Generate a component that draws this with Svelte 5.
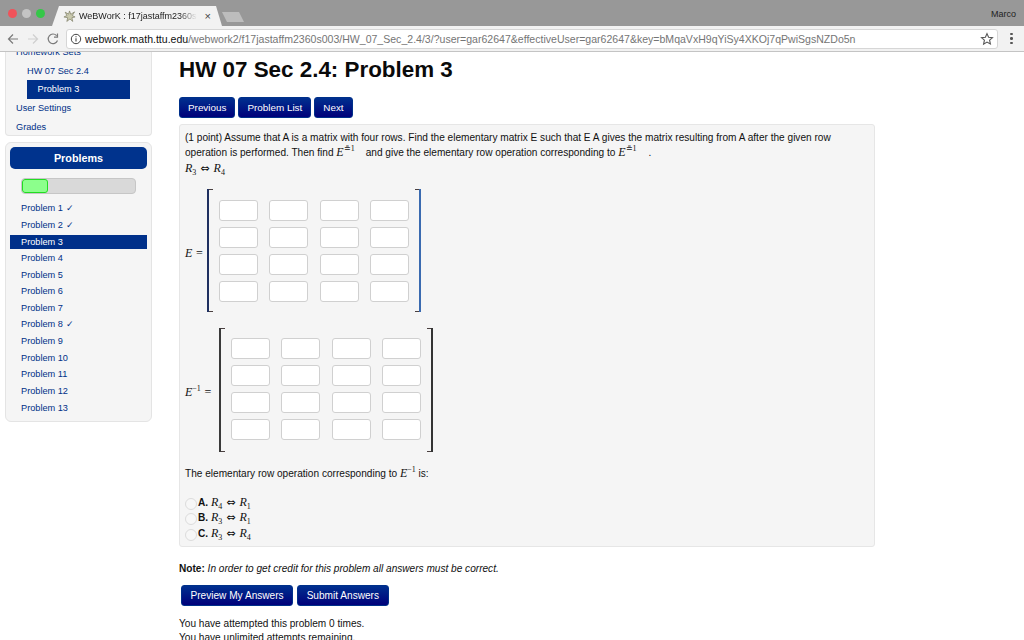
<script>
  const problems = [
    { n: 1, ok: true }, { n: 2, ok: true }, { n: 3, active: true }, { n: 4 }, { n: 5 }, { n: 6 },
    { n: 7 }, { n: 8, ok: true }, { n: 9 }, { n: 10 }, { n: 11 }, { n: 12 }, { n: 13 }
  ];
  const cells = Array.from({ length: 16 }, (_, i) => i);
</script>

<div class="window">
  <header class="titlebar">
    <div class="lights"><i class="red"></i><i class="grey"></i><i class="green"></i></div>
    <div class="tab">
      <svg class="fav" viewBox="0 0 14 14" width="13" height="13"><path d="M7 1l1.400 3.600L12.500 2 10 6l3 1.500-3.400.8.900 4-3-2.600-3.400 2.600 1-4L1 7.500 4.200 6 2.400 2.400l3.600 2z" fill="#c9c9ae" stroke="#77775f" stroke-width=".7"/></svg>
      <span class="tabtext">WeBWorK : f17jastaffm2360s003</span>
      <span class="close">×</span>
    </div>
    <div class="newtab"></div>
    <span class="user">Marco</span>
  </header>

  <div class="toolbar">
    <svg class="nav" viewBox="0 0 14 14" width="14" height="14"><path d="M12 7H3M7 2.500L2.500 7 7 11.500" fill="none" stroke="#7a7a7a" stroke-width="1.200"/></svg>
    <svg class="nav" viewBox="0 0 14 14" width="14" height="14"><path d="M2 7h9M7 2.500L11.500 7 7 11.500" fill="none" stroke="#cfcfcf" stroke-width="1.200"/></svg>
    <svg class="nav" viewBox="0 0 14 14" width="14" height="14"><path d="M11.500 8.500A4.800 4.800 0 1 1 10.600 3.600M11.500 1.500v3.600H8" fill="none" stroke="#7a7a7a" stroke-width="1.200"/></svg>
    <div class="omnibox">
      <svg viewBox="0 0 12 12" width="12" height="12"><circle cx="6" cy="6" r="4.700" fill="none" stroke="#444" stroke-width="1"/><path d="M6 5.200v3.200M6 3.300v1" stroke="#444" stroke-width="1.100"/></svg>
      <span class="url"><b>webwork.math.ttu.edu</b>/webwork2/f17jastaffm2360s003/HW_07_Sec_2.4/3/?user=gar62647&amp;effectiveUser=gar62647&amp;key=bMqaVxH9qYiSy4XKOj7qPwiSgsNZDo5n</span>
      <svg class="star" viewBox="0 0 14 14" width="14" height="14"><path d="M7 1.600l1.600 3.600 3.900.4-2.900 2.600.8 3.800L7 10.100l-3.400 2 .8-3.900L1.500 5.600l3.900-.4z" fill="none" stroke="#555" stroke-width="1.100"/></svg>
    </div>
    <div class="kebab"><i></i><i></i><i></i></div>
  </div>

  <div class="page">
    <aside class="sidebar">
      <nav class="panel links">
        <a class="top">Homework Sets</a>
        <a class="sub">HW 07 Sec 2.4</a>
        <a class="current">Problem 3</a>
        <a class="top">User Settings</a>
        <a class="top">Grades</a>
      </nav>
      <div class="panel probs">
        <div class="probhead">Problems</div>
        <div class="progress"><div class="bar"></div></div>
        <ul>
          {#each problems as p}
            <li class:active={p.active}>Problem {p.n}{#if p.ok}<span class="tick">✓</span>{/if}</li>
          {/each}
        </ul>
      </div>
    </aside>

    <main class="content">
      <h1>HW 07 Sec 2.4: Problem 3</h1>
      <div class="btns top-btns">
        <button>Previous</button><button>Problem List</button><button>Next</button>
      </div>
      <section class="problem">
        <p class="intro">(1 point) Assume that A is a matrix with four rows. Find the elementary matrix E such that E A gives the matrix resulting from A after the given row<br>
          operation is performed. Then find <span class="m">E<sup>≗1</sup></span><span class="gap1"></span>and give the elementary row operation corresponding to <span class="m">E<sup>≗1</sup></span><span class="gap2"></span>.<br>
          <span class="m">R<sub>3</sub> <span class="arr">⇔</span> R<sub>4</sub></span></p>

        <div class="eq first">
          <span class="m lhs">E =</span>
          <div class="matrix m1">
            {#each cells as c}<span class="cell"></span>{/each}
          </div>
        </div>

        <div class="eq second">
          <span class="m lhs">E<sup>−1</sup> =</span>
          <div class="matrix m2">
            {#each cells as c}<span class="cell"></span>{/each}
          </div>
        </div>

        <p class="ask">The elementary row operation corresponding to <span class="m">E<sup>−1</sup></span> is:</p>

        <div class="options">
          <label><span class="radio"></span><span><b>A.</b> <span class="m">R<sub>4</sub> <span class="arr">⇔</span> R<sub>1</sub></span></span></label>
          <label><span class="radio"></span><span><b>B.</b> <span class="m">R<sub>3</sub> <span class="arr">⇔</span> R<sub>1</sub></span></span></label>
          <label><span class="radio"></span><span><b>C.</b> <span class="m">R<sub>3</sub> <span class="arr">⇔</span> R<sub>4</sub></span></span></label>
        </div>
      </section>

      <p class="note"><b>Note:</b> <em>In order to get credit for this problem all answers must be correct.</em></p>
      <div class="btns submit-btns">
        <button>Preview My Answers</button><button>Submit Answers</button>
      </div>
      <p class="status">You have attempted this problem 0 times.<br>You have unlimited attempts remaining.</p>
    </main>
  </div>
</div>

<style>
  :global(body) { margin: 0; background: #fff; }
  .window { width: 1024px; height: 640px; overflow: hidden; display: flex; flex-direction: column; font-family: "Liberation Sans", Arial, sans-serif; color: #111; }

  .titlebar { height: 26px; flex: none; background: #989898; display: flex; align-items: flex-end; position: relative; }
  .lights { display: flex; gap: 5px; padding: 0 0 8px 8px; margin-right: 7px; }
  .lights i { width: 9px; height: 9px; border-radius: 50%; display: block; }
  .red { background: #f0525a; } .grey { background: #c4c4c4; } .green { background: #35c748; }
  .tab { width: 170px; height: 20px; background: #f2f2f2; display: flex; align-items: center; box-sizing: border-box; padding: 0 11px 0 11px; clip-path: polygon(0 100%, 7px 0, calc(100% - 6px) 0, 100% 100%); gap: 3px; }
  .fav { flex: none; }
  .tabtext { font-size: 9px; white-space: nowrap; overflow: hidden; flex: 1; color: #222; -webkit-mask-image: linear-gradient(90deg, #000 85%, transparent); mask-image: linear-gradient(90deg, #000 85%, transparent); }
  .close { font-size: 11px; color: #444; margin-left: 5px; }
  .newtab { width: 22px; height: 10px; margin: 0 0 4px 0; background: #bdbdbd; clip-path: polygon(5px 100%, 0 0, 17px 0, 100% 100%); }
  .user { position: absolute; right: 8px; top: 9px; font-size: 9px; color: #222; }

  .toolbar { height: 26px; flex: none; box-sizing: border-box; background: #f2f2f2; border-bottom: 1px solid #c4c4c4; display: flex; align-items: center; padding: 0 0 0 6px; gap: 6px; }
  .nav { flex: none; }
  .omnibox { flex: none; width: 932px; height: 20px; box-sizing: border-box; background: #fff; border: 1px solid #d6d6d6; border-radius: 3px; display: flex; align-items: center; padding: 0 3px 0 3px; gap: 3px; }
  .omnibox > svg:first-child { flex: none; }
  .url { font-size: 10.55px; color: #757575; white-space: nowrap; flex: 1; }
  .url b { font-weight: normal; color: #111; }
  .star { flex: none; }
  .kebab { display: flex; flex-direction: column; gap: 2px; margin-left: 6px; }
  .kebab i { width: 2.5px; height: 2.5px; background: #555; border-radius: 50%; display: block; }

  .page { flex: 1; min-height: 0; overflow: hidden; display: flex; align-items: flex-start; padding-left: 5px; gap: 27px; }

  .sidebar { width: 147px; flex: none; display: flex; flex-direction: column; gap: 6px; margin-top: -9px; }
  .panel { background: #f5f5f5; border: 1px solid #e4e4e4; box-sizing: border-box; }
  .links { height: 93px; display: flex; flex-direction: column; padding: 0 0 0 10px; font-size: 9.2px; color: #003087; border-top: 0; border-radius: 0 0 4px 4px; }
  .links a { display: block; height: 18.6px; line-height: 18.6px; }
  .links .sub { padding-left: 11px; }
  .links .current { margin-left: 11px; width: 103px; height: 19px; line-height: 19px; background: #00308a; color: #fff; padding-left: 10.5px; box-sizing: border-box; }

  .probs { height: 280px; border-radius: 6px; padding: 4px 4px 0; }
  .probhead { height: 22px; line-height: 22px; background: #00338d; color: #fff; text-align: center; font-weight: bold; font-size: 10.8px; border-radius: 5px; }
  .progress { margin: 9px 11px 0; height: 16px; box-sizing: border-box; background: #d9d9d9; border: 1px solid #c6c6c6; border-radius: 4px; overflow: hidden; }
  .bar { width: 26px; height: 14px; box-sizing: border-box; background: #8cff8c; border: 1px solid #22dd22; border-radius: 3px; }
  .probs ul { list-style: none; margin: 6px 0 0; padding: 0; font-size: 9.2px; color: #003087; }
  .probs li { height: 16.65px; line-height: 16.65px; padding-left: 11px; }
  .probs li.active { background: #00308a; color: #fff; height: 14px; line-height: 14px; margin: 1.3px 0; }
  .tick { font-size: 9px; font-family: "DejaVu Sans", sans-serif; margin-left: 3px; }

  .content { width: 696px; flex: none; font-size: 10.1px; }
  h1 { font-size: 22.4px; line-height: 26px; margin: 5px 0 0; font-weight: bold; color: #0a0a0a; }
  .btns { display: flex; }
  button { font: inherit; color: #fff; background: linear-gradient(#00308f, #00007a); border: 1px solid #00308a; border-radius: 3px; padding: 0; }
  .top-btns { margin-top: 14px; gap: 3px; }
  .top-btns button { height: 21px; font-size: 9.9px; padding: 0 8px; }

  .problem { margin-top: 6px; height: 423px; box-sizing: border-box; background: #f5f5f5; border: 1px solid #e6e6e6; border-radius: 3px; padding: 5px 5px 0; }
  .intro { margin: 0; line-height: 15.3px; }
  .m { font-family: "Liberation Serif", "Times New Roman", serif; font-style: italic; font-size: 12px; white-space: nowrap; }
  .m sub, .m sup { font-size: 8px; font-style: normal; line-height: 0; }
  .arr { font-style: normal; font-size: 11px; font-family: "DejaVu Sans", sans-serif; padding: 0 1px; }
  .gap1 { display: inline-block; width: 11px; }
  .gap2 { display: inline-block; width: 12px; }

  .eq { display: flex; align-items: center; }
  .first { margin-top: 13px; }
  .second { margin-top: 16px; }
  .first .lhs { width: 22px; margin-top: 6px; }
  .second .lhs { width: 34px; margin-top: 6px; }
  .matrix { position: relative; display: grid; grid-template-columns: repeat(4, 39px); column-gap: 11.3px; row-gap: 6px; box-sizing: border-box; align-content: start; padding: 0 10px; border-left: 2px solid #3a3a3a; border-right: 2px solid #333; }
  .m1 { height: 123px; padding-top: 11px; border-left-color: #1f3060; border-right-color: #3a6ab0; }
  .m2 { height: 124px; padding-top: 10px; }
  .matrix::before, .matrix::after { content: ""; position: absolute; top: 0; bottom: 0; width: 4px; border-top: 1px solid #4a4040; border-bottom: 1px solid #4a4040; }
  .matrix::before { left: 0; }
  .matrix::after { right: 0; }
  .cell { display: block; height: 21px; box-sizing: border-box; background: #fff; border: 1px solid #d0d0d0; border-radius: 3px; }

  .ask { margin: 14px 0 0; line-height: 15px; }
  .options { margin-top: 14px; display: flex; flex-direction: column; }
  .options label { display: flex; align-items: center; height: 15.3px; white-space: pre; }
  .radio { width: 12px; height: 12px; margin: 3px 1px 0 0; box-sizing: border-box; border-radius: 50%; background: #f7f7f7; border: 1px solid #dcdcdc; flex: none; }

  .note { margin: 15px 0 0; line-height: 14px; color: #111; }
  .submit-btns { margin: 9px 0 0 2px; gap: 4px; }
  .submit-btns button { height: 21px; font-size: 10.1px; padding: 0 8.5px; }
  .status { margin: 11px 0 0; line-height: 14px; }
</style>
